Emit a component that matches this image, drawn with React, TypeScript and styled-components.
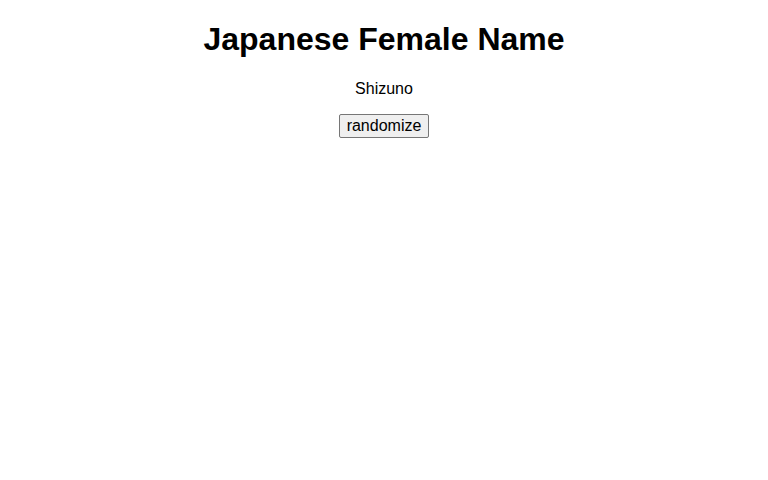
import { useState } from 'react'
import { createGlobalStyle, styled } from 'styled-components'

const GlobalStyle = createGlobalStyle`
  body {
    margin: 0 8px 8px;
    font-family: 'Liberation Sans', Arial, sans-serif;
    background: #ffffff;
    color: #000000;
  }
`

const Page = styled.div`
  text-align: center;
`

const Title = styled.h1`
  font-size: 32px;
  font-weight: bold;
  margin: 21.44px 0;
`

const NameText = styled.p`
  font-size: 16px;
  margin: 16px 0;
`

const RandomButton = styled.button`
  font-family: 'Liberation Sans', Arial, sans-serif;
  font-size: 16px;
  line-height: normal;
  padding: 2px 7px;
  color: #000000;
  background-color: #efefef;
  border: 1px solid #767676;
  border-radius: 2px;
  cursor: pointer;
`

const names = ['Shizuno', 'Sakura', 'Hana', 'Yui', 'Aiko', 'Emi', 'Haruka', 'Mei']

export default function App() {
  const [name, setName] = useState('Shizuno')

  return (
    <Page>
      <GlobalStyle />
      <Title>Japanese Female Name</Title>
      <NameText>{name}</NameText>
      <RandomButton
        onClick={() => setName(names[Math.floor(Math.random() * names.length)])}
      >
        randomize
      </RandomButton>
    </Page>
  )
}
